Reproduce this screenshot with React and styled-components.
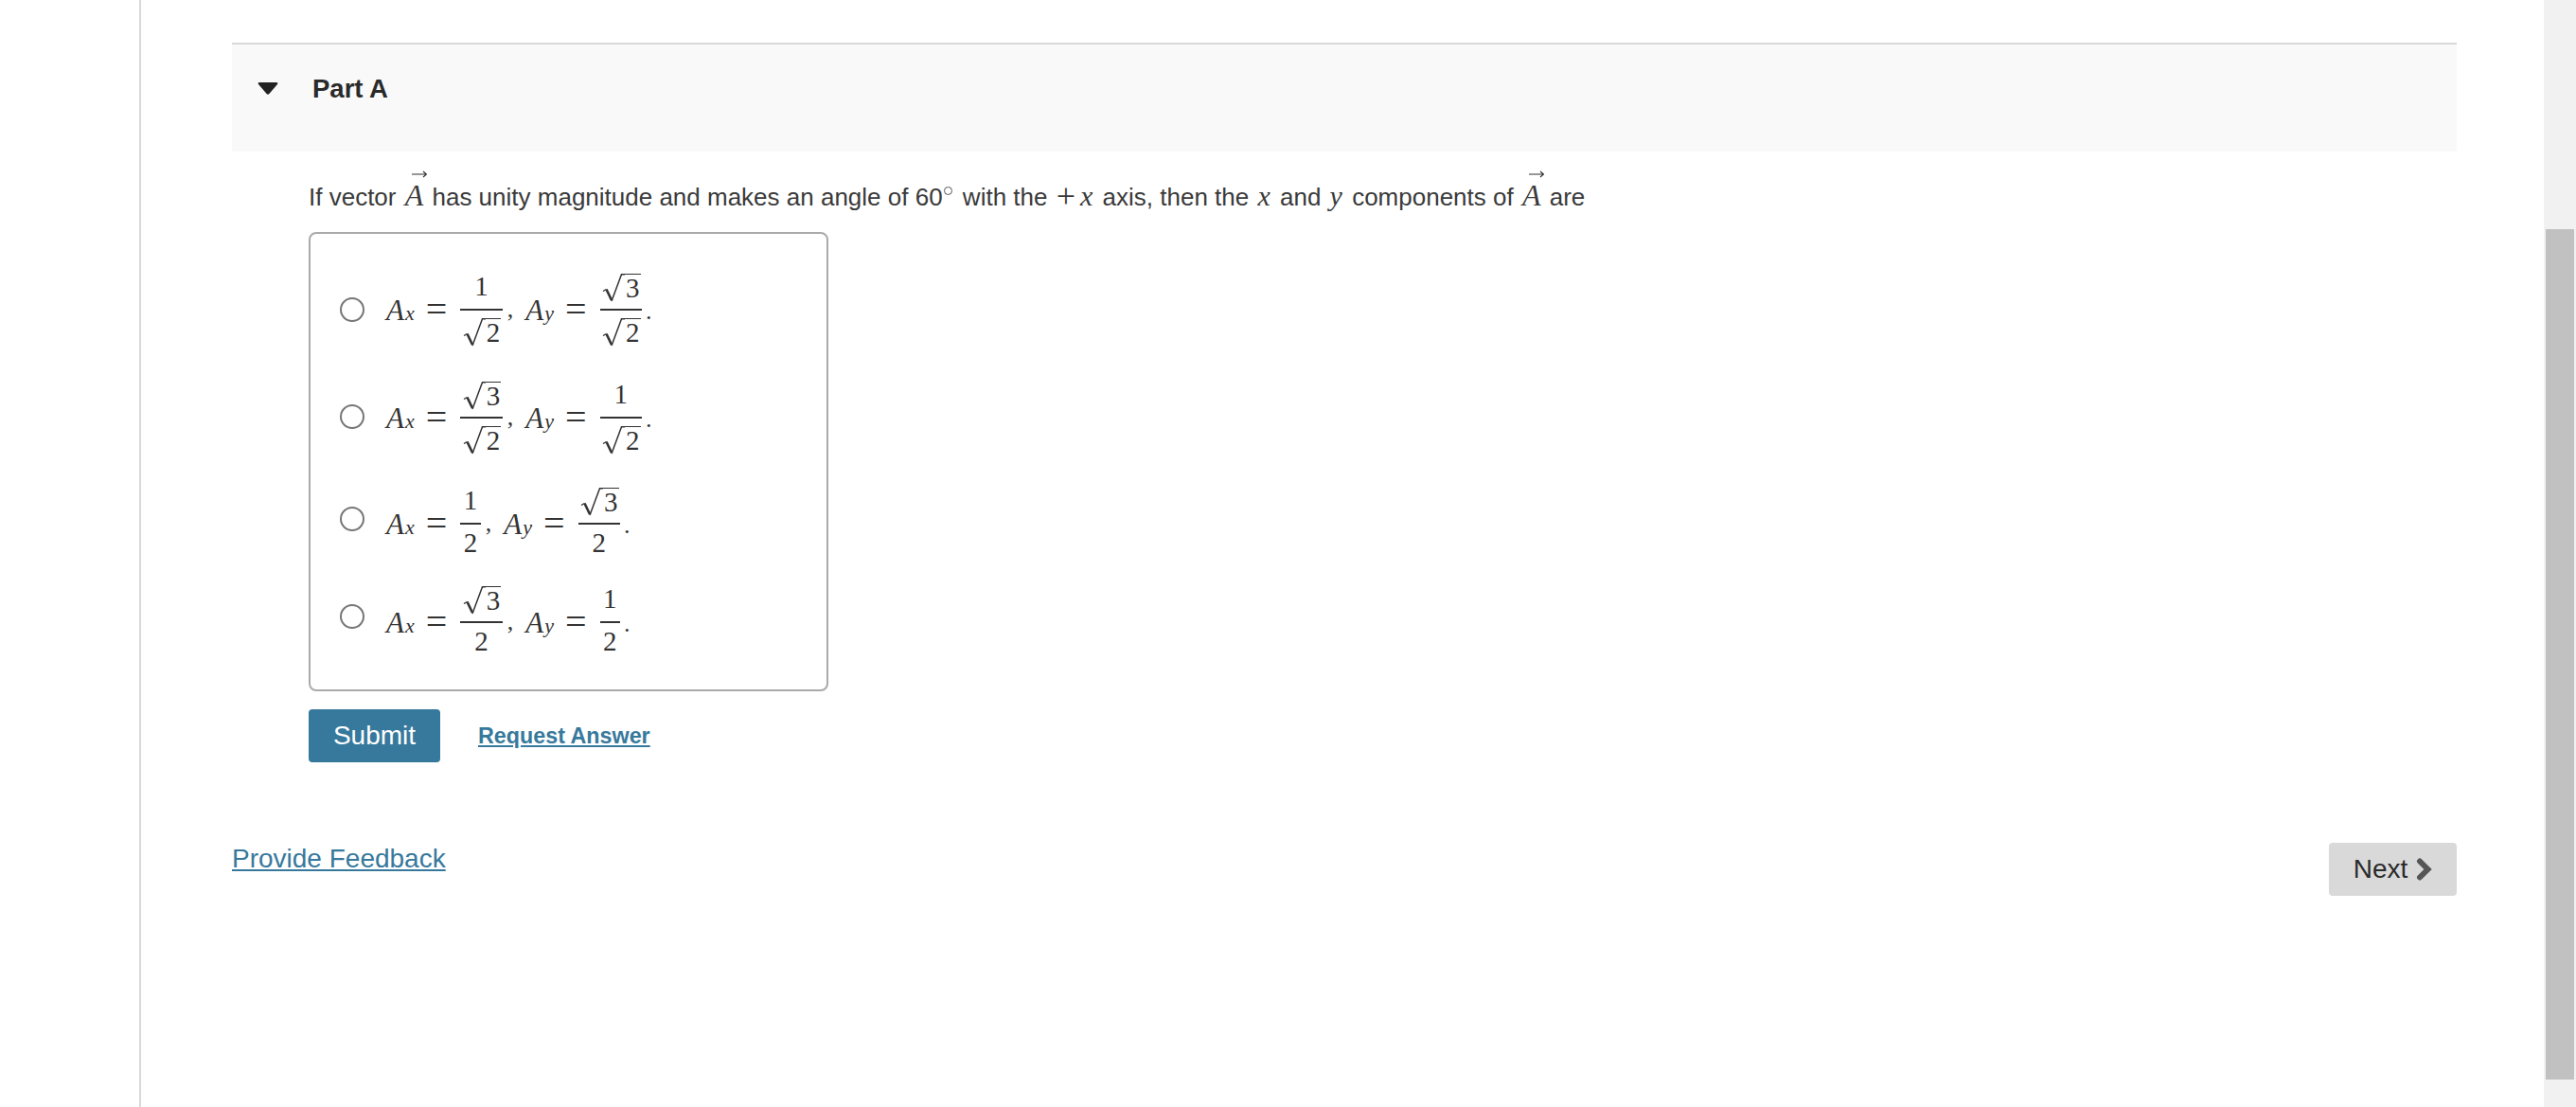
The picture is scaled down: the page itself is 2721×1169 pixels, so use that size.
import styled, { createGlobalStyle } from 'styled-components';

const GlobalStyle = createGlobalStyle`
  html, body {
    margin: 0;
    height: 100%;
    overflow: hidden;
    background: #fff;
    font-family: "Liberation Sans", Arial, sans-serif;
    color: #333;
  }
  #root {
    height: 100%;
  }
`;

const Page = styled.div`
  display: flex;
  height: 100vh;
`;
const Main = styled.main`
  flex: 1;
  min-width: 0;
  padding-left: 147px;
`;
const Column = styled.div`
  height: 100%;
  box-sizing: border-box;
  border-left: 2px solid #d9d9d9;
  padding: 45px 92px 0 96px;
`;
const ScrollTrack = styled.div`
  width: 34px;
  box-sizing: border-box;
  background: #f1f1f1;
  padding: 242px 2px 29px;
  display: flex;
`;
const ScrollThumb = styled.div`
  flex: 1;
  background: #c1c1c1;
`;

const PartHeader = styled.div`
  height: 115px;
  box-sizing: border-box;
  border-top: 2px solid #d9d9d9;
  background: #f9f9f9;
  display: flex;
  align-items: flex-start;
  padding: 31px 0 0 27px;
`;
const Caret = styled.svg`
  width: 22px;
  height: 13px;
  margin: 9px 36px 0 0;
  fill: #222;
`;
const PartTitle = styled.h2`
  margin: 0;
  font-size: 27.5px;
  line-height: 32px;
  font-weight: 700;
  color: #2a2a2a;
`;

const Body = styled.div`
  padding-left: 81px;
`;
const Question = styled.p`
  margin: 28px 0 17px;
  font-size: 26px;
  line-height: 40px;
  height: 40px;
  white-space: nowrap;
  color: #3a3a3a;
`;
const Var = styled.i`
  font-family: "Liberation Serif", "Times New Roman", serif;
  font-style: italic;
  font-size: ${(p) => p.$size || 31}px;
  line-height: 1;
`;
const InlineVar = styled(Var).attrs({ $size: 30 })`
  margin: 0 3px 0 2px;
`;
const Vec = styled.span`
  position: relative;
  display: inline-block;
  margin: 0 2px;
  line-height: 1;
`;
const VecArrow = styled.svg`
  position: absolute;
  left: 7px;
  top: -10px;
  width: 16px;
  height: 8px;
  stroke: #333;
  fill: none;
`;
const Degree = styled.span`
  display: inline-block;
  width: 9px;
  height: 9px;
  box-sizing: border-box;
  border: 1px solid #555;
  border-radius: 50%;
  vertical-align: 11px;
  margin: 0 4px 0 1px;
`;
const Plus = styled.span`
  font-family: "Liberation Serif", serif;
  font-size: 36px;
  line-height: 1;
  margin: 0 3px 0 2px;
  vertical-align: -2px;
`;

const Card = styled.div`
  width: 549px;
  height: 485px;
  box-sizing: border-box;
  border: 2px solid #aaa;
  border-radius: 8px;
  padding: 23px 0 0 31px;
`;
const Choice = styled.label`
  display: flex;
  align-items: center;
  height: ${(p) => p.$height}px;
`;
const Radio = styled.input.attrs({ type: 'radio', name: 'answer' })`
  appearance: none;
  width: 26px;
  height: 26px;
  box-sizing: border-box;
  margin: 0 23px ${(p) => p.$lift * 2}px 0;
  border: 2px solid #767676;
  border-radius: 50%;
  background: #fff;
`;

const Formula = styled.span`
  display: inline-flex;
  align-items: center;
  color: #333;
`;
const Symbol = styled.span`
  display: inline-flex;
  align-items: baseline;
  margin-top: 1px;
`;
const Sub = styled.sub`
  font-family: "Liberation Serif", serif;
  font-style: italic;
  font-size: 22px;
  line-height: 0;
  vertical-align: -6px;
  margin: 0 5px 0 1px;
`;
const Equals = styled.span`
  font-family: "Liberation Serif", serif;
  font-size: 40px;
  line-height: 1;
  margin: 0 14px 0 7px;
`;
const Comma = styled.span`
  font-family: "Liberation Serif", serif;
  font-size: 26px;
  line-height: 1;
  margin: 0 13px 0 5px;
`;
const Dot = styled.span`
  font-family: "Liberation Serif", serif;
  font-size: 26px;
  line-height: 1;
  margin: 4px 0 0 4px;
`;

const Frac = styled.span`
  display: inline-grid;
  grid-template-rows: 44px 2px 44px;
  justify-items: center;
`;
const Num = styled.span`
  align-self: end;
  padding: 0 1.5px ${(p) => (p.$root ? 7 : 9)}px;
`;
const Den = styled.span`
  align-self: start;
  padding: ${(p) => (p.$root ? 8 : 5)}px 1.5px 0;
`;
const Bar = styled.span`
  justify-self: stretch;
  background: #333;
`;
const Digit = styled.span`
  display: block;
  font-family: "Liberation Serif", serif;
  font-size: 29px;
  line-height: 1;
  padding: 0 ${(p) => p.$pad || 0}px;
`;
const Root = styled.span`
  display: flex;
  align-items: flex-start;
`;
const Surd = styled.svg`
  width: 25px;
  height: 30px;
  fill: none;
  stroke: #333;
  display: block;
`;
const Radicand = styled.span`
  border-top: 1.5px solid #333;
  padding: 0 1px;
  height: 28px;
`;

const Actions = styled.div`
  display: flex;
  align-items: center;
  margin-top: 19px;
  gap: 40px;
`;
const Submit = styled.button`
  width: 139px;
  height: 56px;
  border: none;
  border-radius: 4px;
  background: #37799c;
  color: #fff;
  font: 400 28px "Liberation Sans", Arial, sans-serif;
  padding: 0;
`;
const RequestLink = styled.a`
  font-size: 23.3px;
  font-weight: 700;
  color: #37799c;
  text-decoration: underline;
`;

const Footer = styled.div`
  display: flex;
  justify-content: space-between;
  align-items: flex-start;
  margin-top: 85px;
`;
const Feedback = styled.a`
  font-size: 28px;
  line-height: 34px;
  color: #37799c;
  text-decoration: underline;
`;
const NextButton = styled.button`
  width: 135px;
  height: 56px;
  border: none;
  border-radius: 4px;
  background: #d9d9d9;
  color: #2a2a2a;
  font: 400 28px "Liberation Sans", Arial, sans-serif;
  display: flex;
  align-items: center;
  justify-content: center;
  gap: 9px;
  padding: 0;
`;
const Chevron = styled.svg`
  width: 17px;
  height: 24px;
  fill: none;
  stroke: #555;
  stroke-width: 6;
  stroke-linecap: round;
  stroke-linejoin: miter;
`;

const Sqrt = ({ n }) => (
  <Root>
    <Surd viewBox="0 0 25 30">
      <path d="M2 18.5 L5.5 16.5" strokeWidth="1.4" />
      <path d="M5.5 16.5 L11 28" strokeWidth="2.6" />
      <path d="M11 29 L21.5 0.75 L25 0.75" strokeWidth="1.5" />
    </Surd>
    <Radicand>
      <Digit>{n}</Digit>
    </Radicand>
  </Root>
);

const Value = ({ v }) => (v.length > 1 ? <Sqrt n={v[1]} /> : <Digit $pad={2}>{v}</Digit>);

const Fraction = ({ top, bottom }) => (
  <Frac>
    <Num $root={top.length > 1}>
      <Value v={top} />
    </Num>
    <Bar />
    <Den $root={bottom.length > 1}>
      <Value v={bottom} />
    </Den>
  </Frac>
);

const VectorA = () => (
  <Vec>
    <Var $size={32}>A</Var>
    <VecArrow viewBox="0 0 16 8">
      <path d="M0 4 H15 M12 1 L15.5 4 L12 7" strokeWidth="1.2" />
    </VecArrow>
  </Vec>
);

const choices = [
  { height: 114, lift: 0, ax: ['1', 'r2'], ay: ['r3', 'r2'] },
  { height: 114, lift: 1, ax: ['r3', 'r2'], ay: ['1', 'r2'] },
  { height: 110, lift: 5, ax: ['1', '2'], ay: ['r3', '2'] },
  { height: 98, lift: 6, ax: ['r3', '2'], ay: ['1', '2'] },
];

export default function App() {
  return (
    <Page>
      <GlobalStyle />
      <Main>
        <Column>
          <PartHeader>
            <Caret viewBox="0 0 22 13">
              <path d="M2 0 H20 Q22 0 21 2 L12.4 12 Q11 13.4 9.6 12 L1 2 Q0 0 2 0 Z" />
            </Caret>
            <PartTitle>Part A</PartTitle>
          </PartHeader>
          <Body>
            <Question>
              If vector <VectorA /> has unity magnitude and makes an angle of 60
              <Degree /> with the <Plus>+</Plus>
              <InlineVar>x</InlineVar> axis, then the <InlineVar>x</InlineVar> and{' '}
              <InlineVar>y</InlineVar> components of <VectorA /> are
            </Question>
            <Card>
              {choices.map((c, i) => (
                <Choice key={i} $height={c.height}>
                  <Radio $lift={c.lift} />
                  <Formula>
                    <Symbol>
                      <Var>A</Var>
                      <Sub>x</Sub>
                    </Symbol>
                    <Equals>=</Equals>
                    <Fraction top={c.ax[0]} bottom={c.ax[1]} />
                    <Comma>,</Comma>
                    <Symbol>
                      <Var>A</Var>
                      <Sub>y</Sub>
                    </Symbol>
                    <Equals>=</Equals>
                    <Fraction top={c.ay[0]} bottom={c.ay[1]} />
                    <Dot>.</Dot>
                  </Formula>
                </Choice>
              ))}
            </Card>
            <Actions>
              <Submit>Submit</Submit>
              <RequestLink href="#">Request Answer</RequestLink>
            </Actions>
          </Body>
          <Footer>
            <Feedback href="#">Provide Feedback</Feedback>
            <NextButton>
              Next
              <Chevron viewBox="0 0 17 24">
                <path d="M4 3.5 L12.5 12 L4 20.5" />
              </Chevron>
            </NextButton>
          </Footer>
        </Column>
      </Main>
      <ScrollTrack>
        <ScrollThumb />
      </ScrollTrack>
    </Page>
  );
}
